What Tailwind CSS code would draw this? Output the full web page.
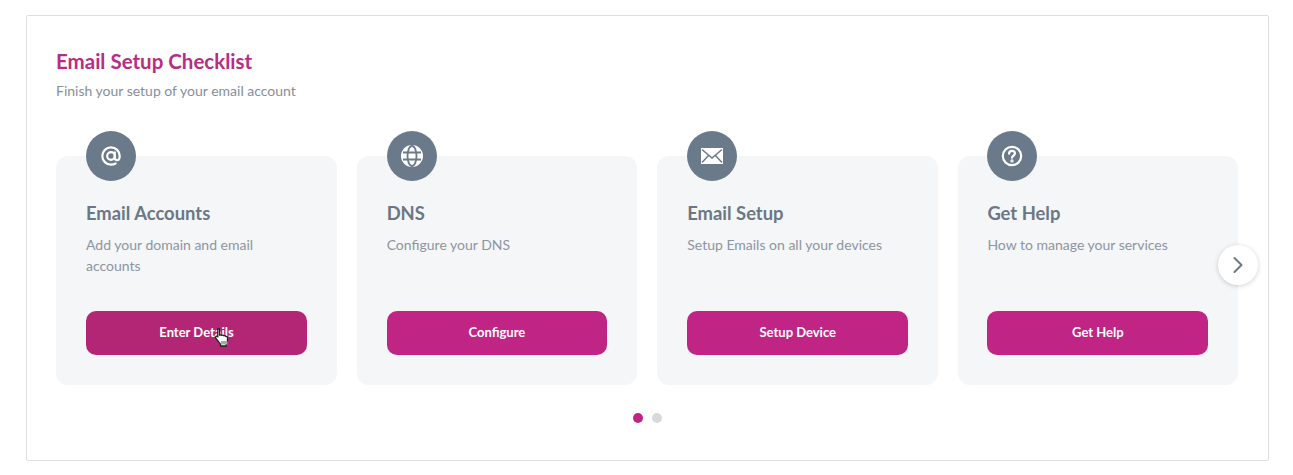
<!DOCTYPE html>
<html><head><meta charset="utf-8"><script src="https://cdn.jsdelivr.net/npm/@tailwindcss/browser@4"></script></head>
<body class="bg-white font-['Lato','Noto_Sans',sans-serif] antialiased">
<div class="w-[1293px] h-[475px] pt-[15px] pl-[26px] overflow-hidden">
<section class="relative w-[1243px] h-[446px] border border-[#dedfe1] rounded-[2px] pt-[32px] pl-[29px] pr-[30px] bg-white">
  <h2 class="text-[20.5px] leading-[26px] font-bold text-[#b92c84]">Email Setup Checklist</h2>
  <p class="mt-[7px] text-[14px] leading-[20px] text-[#868f9c]">Finish your setup of your email account</p>
  <div class="mt-[55px] flex gap-[20px]">

    <article class="relative flex-1 h-[229px] rounded-[12px] bg-[#f4f6f8] px-[30px] pt-[45px]">
      <div class="absolute left-[30px] top-[-25px] w-[50px] h-[50px] rounded-full bg-[#6b7a8a] flex items-center justify-center">
        <svg width="24" height="24" viewBox="0 0 24 24" fill="none" stroke="#fff" stroke-width="2.2" stroke-linecap="round"><circle cx="12" cy="12" r="3.8"/><path d="M15.8 8.4v5.2c0 1.6 1 2.6 2.3 2.6s2.6-1.2 2.6-4.2A8.7 8.7 0 1 0 12 20.7c1.8 0 3.2-.4 4.6-1.2"/></svg>
      </div>
      <h3 class="text-[18.400px] leading-[24px] font-bold text-[#6b7785]">Email Accounts</h3>
      <p class="mt-[9px] text-[14px] leading-[21px] text-[#8d95a1]">Add your domain and email accounts</p>
      <button class="absolute left-[30px] top-[155px] w-[221px] h-[44px] rounded-[10px] bg-[#b32675] text-white text-[13px] font-bold">Enter Details</button>
      <svg class="absolute left-[158px] top-[171px]" width="18" height="20" viewBox="0 0 18 20"><path d="M4 1.500c1 0 1.600.6 1.600 1.500v5l1-.2c.6 0 1 .2 1.300.5.700-.3 1.500-.2 1.900.4.800-.3 1.600 0 2 .7.900-.2 1.700.4 1.700 1.300v3.300c0 1.300-.5 2.200-1.300 3.200v1.800H6.500v-1.800L2 11.500c-.6-.7-.6-1.500 0-2 .5-.4 1.200-.3 1.800.1V3c0-.9.100-1.500.2-1.500z" fill="#fff" stroke="#222" stroke-width="1.300"/><path d="M7 14h6.500v3.500H7z" fill="#a9a9ad"/></svg>
    </article>

    <article class="relative flex-1 h-[229px] rounded-[12px] bg-[#f4f6f8] px-[30px] pt-[45px]">
      <div class="absolute left-[30px] top-[-25px] w-[50px] h-[50px] rounded-full bg-[#6b7a8a] flex items-center justify-center">
        <svg width="22" height="22" viewBox="0 0 22 22"><circle cx="11" cy="11" r="11" fill="#fff"/><g fill="none" stroke="#6b7a8a" stroke-width="1.800"><ellipse cx="11" cy="11" rx="4.500" ry="10"/><path d="M2 7.500h18M2 14.500h18"/></g></svg>
      </div>
      <h3 class="text-[18.400px] leading-[24px] font-bold text-[#6b7785]">DNS</h3>
      <p class="mt-[9px] text-[14px] leading-[21px] text-[#8d95a1]">Configure your DNS</p>
      <button class="absolute left-[30px] top-[155px] w-[220.500px] h-[44px] rounded-[10px] bg-[#c02586] text-white text-[13px] font-bold">Configure</button>
    </article>

    <article class="relative flex-1 h-[229px] rounded-[12px] bg-[#f4f6f8] px-[30px] pt-[45px]">
      <div class="absolute left-[30px] top-[-25px] w-[50px] h-[50px] rounded-full bg-[#6b7a8a] flex items-center justify-center">
        <svg width="22" height="16" viewBox="0 0 22 16"><rect width="22" height="16" fill="#fff"/><path d="M1 1.500 11 10 21 1.500M1 14.500 8 7M21 14.500 14 7" fill="none" stroke="#6b7a8a" stroke-width="1.500"/></svg>
      </div>
      <h3 class="text-[18.400px] leading-[24px] font-bold text-[#6b7785]">Email Setup</h3>
      <p class="mt-[9px] text-[14px] leading-[21px] text-[#8d95a1]">Setup Emails on all your devices</p>
      <button class="absolute left-[30px] top-[155px] w-[221px] h-[44px] rounded-[10px] bg-[#c02586] text-white text-[13px] font-bold">Setup Device</button>
    </article>

    <article class="relative flex-1 h-[229px] rounded-[12px] bg-[#f4f6f8] pl-[29.500px] pr-[30px] pt-[45px]">
      <div class="absolute left-[29.500px] top-[-25px] w-[50px] h-[50px] rounded-full bg-[#6b7a8a] flex items-center justify-center">
        <svg width="22" height="22" viewBox="0 0 24 24" fill="none" stroke="#fff" stroke-width="2.400" stroke-linecap="round"><circle cx="12" cy="12" r="10"/><path d="M8.800 9.500c0-1.900 1.400-3 3.200-3s3.200 1.100 3.200 2.800c0 2.400-3.200 2.400-3.200 4.600"/><circle cx="12" cy="17.400" r=".6" fill="#fff"/></svg>
      </div>
      <h3 class="text-[18.400px] leading-[24px] font-bold text-[#6b7785]">Get Help</h3>
      <p class="mt-[9px] text-[14px] leading-[21px] text-[#8d95a1]">How to manage your services</p>
      <button class="absolute left-[29.500px] top-[155px] w-[221px] h-[44px] rounded-[10px] bg-[#c02586] text-white text-[13px] font-bold">Get Help</button>
    </article>
  </div>
  <div class="mt-[28px] flex justify-center gap-[9px]">
    <span class="w-[10px] h-[10px] rounded-full bg-[#c02586]"></span>
    <span class="w-[10px] h-[10px] rounded-full bg-[#d8d9db]"></span>
  </div>
  <button class="absolute left-[1191px] top-[229px] w-[40px] h-[40px] rounded-full bg-white shadow-[0_1px_5px_rgba(0,0,0,0.18)] flex items-center justify-center">
    <svg width="12" height="18" viewBox="0 0 12 18" fill="none" stroke="#6b7785" stroke-width="2" stroke-linecap="round" stroke-linejoin="round"><path d="M2.500 2 9.500 9l-7 7"/></svg>
  </button>
</section>
</div>
</body></html>
